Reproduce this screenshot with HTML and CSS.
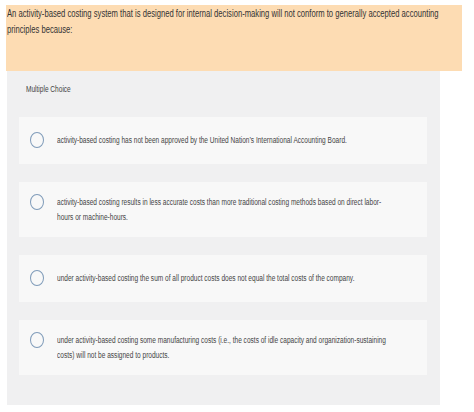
FILE: index.html
```html
<!DOCTYPE html>
<html>
<head>
<meta charset="utf-8">
<link rel="stylesheet" href="styles.css">
</head>
<body>
<div class="question">
  <p class="question-text">An activity-based costing system that is designed for internal decision-making will not conform to generally accepted accounting principles because:</p>
</div>
<div class="panel">
  <div class="label"><span class="label-text">Multiple Choice</span></div>
  <div class="options">
    <div class="card">
      <div class="row">
        <span class="radio"></span>
        <span class="opt">activity-based costing has not been approved by the United Nation’s International Accounting Board.</span>
      </div>
    </div>
    <div class="card">
      <div class="row">
        <span class="radio"></span>
        <span class="opt">activity-based costing results in less accurate costs than more traditional costing methods based on direct labor-hours or machine-hours.</span>
      </div>
    </div>
    <div class="card">
      <div class="row">
        <span class="radio"></span>
        <span class="opt">under activity-based costing the sum of all product costs does not equal the total costs of the company.</span>
      </div>
    </div>
    <div class="card">
      <div class="row">
        <span class="radio"></span>
        <span class="opt">under activity-based costing some manufacturing costs (i.e., the costs of idle capacity and organization-sustaining costs) will not be assigned to products.</span>
      </div>
    </div>
  </div>
</div>
</body>
</html>
```
FILE: styles.css
```css
* { box-sizing: border-box; }
body {
  margin: 0;
  background: #ffffff;
  font-family: "Liberation Sans", Arial, sans-serif;
  color: #3a3a3a;
}
.question {
  margin: 5px 0 0 6px;
  width: 456px;
  height: 66px;
  background: #fddcb3;
  padding: 0 0 0 1px;
  overflow: hidden;
}
.question-text {
  margin: 0;
  width: 570px;
  font-size: 10px;
  line-height: 16px;
  padding-top: 1px;
  color: #333;
  transform: scaleX(0.765);
  transform-origin: left top;
}
.panel {
  margin-left: 7px;
  width: 433px;
  background: #f0f0f1;
  padding: 0 13px 30px 12px;
}
.label {
  height: 46px;
  padding: 11px 0 0 7px;
  line-height: 10px;
}
.label-text {
  display: inline-block;
  font-size: 8.5px;
  color: #444;
  transform: scaleX(0.77);
  transform-origin: left center;
}
.options {
  display: flex;
  flex-direction: column;
  gap: 18px;
}
.card {
  background: #f8f8f8;
  min-height: 47px;
  padding: 13px 0 13px 11px;
  display: flex;
  align-items: center;
  overflow: hidden;
}
.row {
  display: flex;
  align-items: flex-start;
  gap: 13px;
}
.radio {
  flex: none;
  width: 14px;
  height: 16px;
  border: 1.2px solid #7f9bb9;
  border-radius: 50%;
  margin-top: -1px;
}
.opt {
  flex: none;
  width: 435px;
  font-size: 8.5px;
  line-height: 14.5px;
  color: #444;
  transform: scaleX(0.77);
  transform-origin: left top;
}
```
